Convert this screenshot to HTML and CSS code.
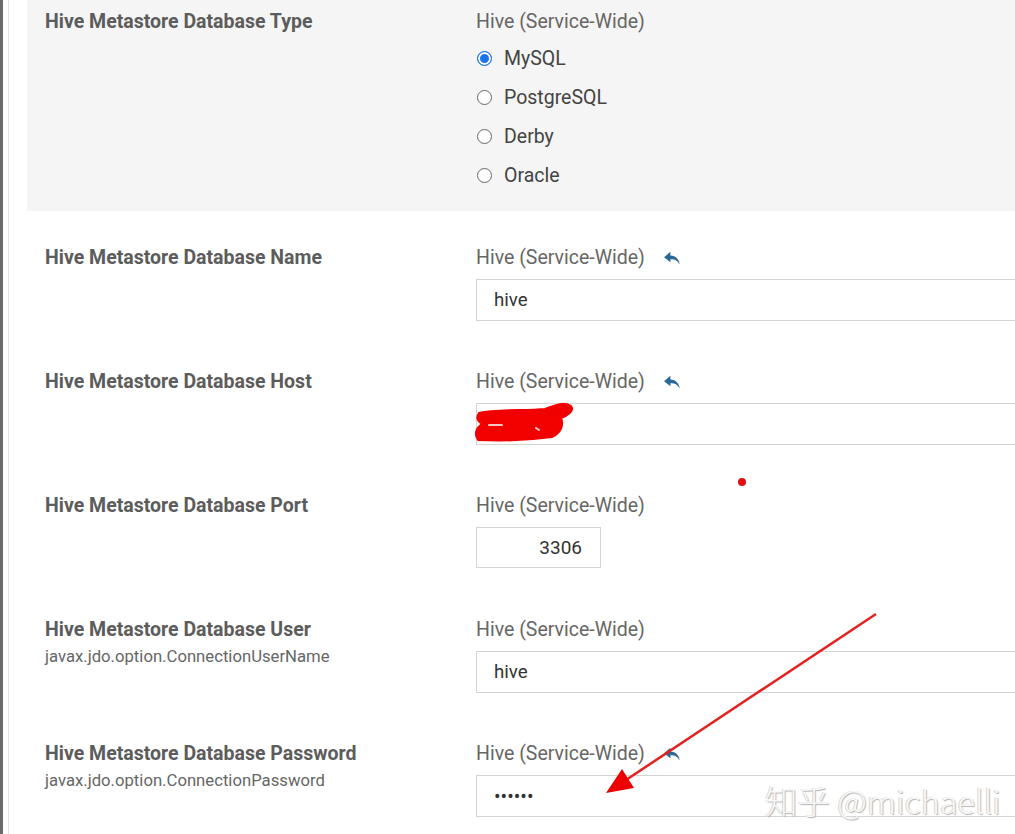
FILE: index.html
```html
<!DOCTYPE html>
<html lang="en">
<head>
<meta charset="utf-8">
<title>Hive Metastore Database</title>
<link rel="stylesheet" href="styles.css">
</head>
<body>
<div class="frame">
  <div class="inner">
    <section class="row row-type">
      <div class="label-col">
        <div class="label">Hive Metastore Database Type</div>
      </div>
      <div class="value-col">
        <div class="scope">Hive (Service-Wide)</div>
        <ul class="radios">
          <li class="radio checked"><span class="dot"></span>MySQL</li>
          <li class="radio"><span class="dot"></span>PostgreSQL</li>
          <li class="radio"><span class="dot"></span>Derby</li>
          <li class="radio"><span class="dot"></span>Oracle</li>
        </ul>
      </div>
    </section>

    <section class="row">
      <div class="label-col">
        <div class="label">Hive Metastore Database Name</div>
      </div>
      <div class="value-col">
        <div class="scope">Hive (Service-Wide) <svg class="undo" viewBox="0 0 16 14"><path d="M6.5 0.8 L0.6 5.8 L6.5 10.6 V7.7 C10.2 7.6 13 8.7 15.2 12.6 C14.6 7.8 11.6 4.3 6.5 4.1 Z"/></svg></div>
        <div class="field wide">hive</div>
      </div>
    </section>

    <section class="row">
      <div class="label-col">
        <div class="label">Hive Metastore Database Host</div>
      </div>
      <div class="value-col">
        <div class="scope">Hive (Service-Wide) <svg class="undo" viewBox="0 0 16 14"><path d="M6.5 0.8 L0.6 5.8 L6.5 10.6 V7.7 C10.2 7.6 13 8.7 15.2 12.6 C14.6 7.8 11.6 4.3 6.5 4.1 Z"/></svg></div>
        <div class="field wide"></div>
      </div>
    </section>

    <section class="row">
      <div class="label-col">
        <div class="label">Hive Metastore Database Port</div>
      </div>
      <div class="value-col">
        <div class="scope">Hive (Service-Wide)</div>
        <div class="field port">3306</div>
      </div>
    </section>

    <section class="row">
      <div class="label-col">
        <div class="label">Hive Metastore Database User</div>
        <div class="sublabel">javax.jdo.option.ConnectionUserName</div>
      </div>
      <div class="value-col">
        <div class="scope">Hive (Service-Wide)</div>
        <div class="field wide">hive</div>
      </div>
    </section>

    <section class="row">
      <div class="label-col">
        <div class="label">Hive Metastore Database Password</div>
        <div class="sublabel">javax.jdo.option.ConnectionPassword</div>
      </div>
      <div class="value-col">
        <div class="scope">Hive (Service-Wide) <svg class="undo" viewBox="0 0 16 14"><path d="M6.5 0.8 L0.6 5.8 L6.5 10.6 V7.7 C10.2 7.6 13 8.7 15.2 12.6 C14.6 7.8 11.6 4.3 6.5 4.1 Z"/></svg></div>
        <div class="field wide pw">••••••</div>
      </div>
    </section>
  </div>
</div>

<svg class="annot" viewBox="0 0 1015 834" width="1015" height="834">
  <path class="scribble" d="M479 413 C496 409 525 411 545 409 C555 405 565 401 571 406 C575 411 567 416 561 418 C564 425 561 433 552 437 C530 440 500 441 478 440 C474 434 476 428 482 424 C477 421 476 417 479 413 Z"/>
  <path class="scribble-gap" d="M489 425 L502 425 M536 428 L539 430"/>
  <circle cx="742" cy="482" r="4" class="reddot"/>
  <line x1="876" y1="614" x2="626" y2="780" class="arrow-line"/>
  <polygon points="606,793 634,788 622,769" class="arrow-head"/>
</svg>

<div class="watermark">知乎 @michaelli</div>
</body>
</html>
```

FILE: styles.css
```css
html, body {
  margin: 0;
  padding: 0;
  width: 1015px;
  height: 834px;
  overflow: hidden;
  background: #ffffff;
}

body {
  font-family: Roboto, "Liberation Sans", sans-serif;
  color: #555;
  position: relative;
}

.frame {
  border-left: 3px solid #6a6a6a;
  padding-left: 5px;
  height: 834px;
  box-sizing: border-box;
}

.inner {
  border-left: 1px solid #e2e2e2;
  padding-left: 18px;
  height: 100%;
  width: 1100px;
}

.row {
  display: grid;
  grid-template-columns: 431px 1fr;
  padding: 37px 0 14px 18px;
  height: 124px;
  box-sizing: border-box;
}

.row-type {
  background: #f5f5f5;
  padding-top: 12px;
  padding-bottom: 16px;
  height: 211px;
}

.label {
  font-size: 19.5px;
  line-height: 20px;
  font-weight: 700;
  color: #5c5c5c;
}

.sublabel {
  font-size: 16.7px;
  line-height: 18px;
  margin-top: 8px;
  color: #666;
}

.scope {
  font-size: 19.5px;
  line-height: 20px;
  color: #666;
  display: flex;
  align-items: center;
  gap: 18px;
}

.undo {
  width: 18px;
  height: 15px;
  fill: #2a6898;
}

.radios {
  list-style: none;
  margin: 7px 0 0;
  padding: 0;
}

.radio {
  height: 39px;
  display: flex;
  align-items: center;
  gap: 12px;
  font-size: 19.5px;
  color: #444;
}

.dot {
  width: 15px;
  height: 15px;
  border-radius: 50%;
  border: 1px solid #666;
  box-sizing: border-box;
  background: #fff;
  margin-left: 1px;
}

.checked .dot {
  border: 1px solid #1a73e8;
  background: #1a73e8;
  box-shadow: inset 0 0 0 2px #fff;
}

.field {
  margin-top: 11px;
  height: 42px;
  box-sizing: border-box;
  border: 1px solid #d4d4d4;
  background: #fff;
  font-size: 18.7px;
  color: #333;
  display: flex;
  align-items: center;
  padding: 0 17px;
}

.wide {
  width: 700px;
}

.port {
  width: 125px;
  height: 41px;
  font-size: 19px;
  justify-content: flex-end;
  padding-right: 18px;
}

.pw {
  font-size: 19.5px;
}

.annot {
  position: absolute;
  left: 0;
  top: 0;
  pointer-events: none;
}

.scribble {
  fill: #f20000;
  stroke: #f20000;
  stroke-width: 2;
  stroke-linejoin: round;
}

.scribble-gap {
  stroke: #ffc4c4;
  stroke-width: 2;
  stroke-linecap: round;
}

.reddot {
  fill: #e01010;
}

.arrow-line {
  stroke: #e3221f;
  stroke-width: 2.5;
}

.arrow-head {
  fill: #ee0000;
}

.watermark {
  position: absolute;
  left: 765px;
  top: 778px;
  font-family: "Noto Sans CJK SC", Roboto, sans-serif;
  font-weight: 300;
  font-size: 32.5px;
  line-height: 44px;
  color: #f8f8f8;
  text-shadow: 1px 1px 1px #b4b4b4, -1px 0 0 #d8d8d8;
  white-space: nowrap;
}
```
